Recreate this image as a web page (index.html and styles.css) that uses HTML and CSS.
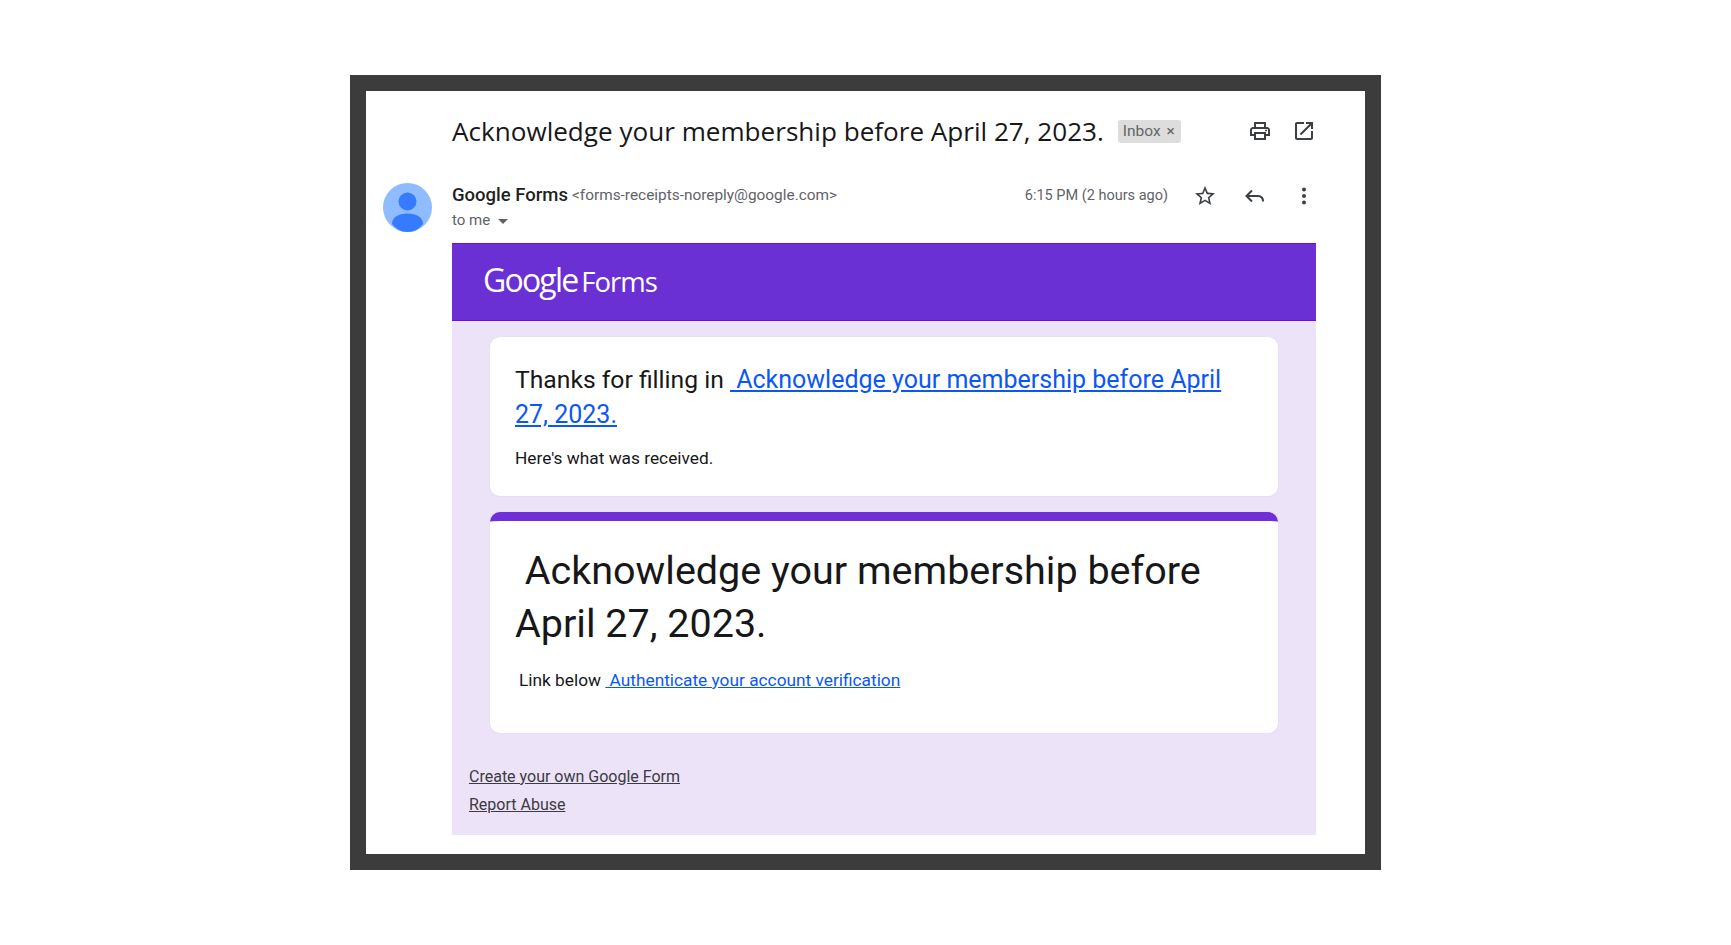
FILE: index.html
```html
<!DOCTYPE html>
<html lang="en">
<head>
  <meta charset="UTF-8" />
  <title>Acknowledge your membership before April 27, 2023.</title>
  <link rel="stylesheet" href="styles.css">
</head>
<body>

  <div class="frame">
    <div class="subject-row">
      <h1 class="subject">Acknowledge your membership before April 27, 2023.</h1>
      <span class="chip">Inbox <span class="chip-x">×</span></span>
      <div class="subject-icons">
        <svg class="icon" viewBox="0 0 24 24"><path d="M19 8h-1V3H6v5H5c-1.66 0-3 1.34-3 3v6h4v4h12v-4h4v-6c0-1.66-1.34-3-3-3zM8 5h8v3H8V5zm8 12v2H8v-4h8v2zm2-2v-2H6v2H4v-4c0-.55.45-1 1-1h14c.55 0 1 .45 1 1v4h-2z"/><circle cx="18" cy="11.5" r="1"/></svg>
        <svg class="icon" viewBox="0 0 24 24"><path d="M19 19H5V5h7V3H5c-1.11 0-2 .9-2 2v14c0 1.1.89 2 2 2h14c1.1 0 2-.9 2-2v-7h-2v7zM14 3v2h3.59l-9.83 9.83 1.41 1.41L19 6.41V10h2V3h-7z"/></svg>
      </div>
    </div>

    <div class="sender-row">
      <svg class="avatar" viewBox="0 0 49 49">
        <circle cx="24.5" cy="24.5" r="24.5" fill="#8fbcff"/>
        <circle cx="24.5" cy="18.500" r="9" fill="#357aff"/>
        <path d="M9 41c0-7 7-10.500 15.500-10.500S40 34 40 41c-4 5-9 8-15.500 8S13 46 9 41z" fill="#357aff"/>
      </svg>
      <div class="sender-info">
        <div class="sender-line">
          <b class="sender-name">Google Forms</b>
          <span class="sender-mail">&lt;forms-receipts-noreply@google.com&gt;</span>
          <span class="sender-time">6:15 PM (2 hours ago)</span>
          <div class="sender-icons">
            <svg class="icon" viewBox="0 0 24 24"><path d="M22 9.24l-7.19-.62L12 2 9.19 8.63 2 9.24l5.46 4.73L5.82 21 12 17.27 18.18 21l-1.63-7.03L22 9.24zM12 15.4l-3.76 2.27 1-4.28-3.32-2.88 4.38-.38L12 6.1l1.71 4.04 4.38.38-3.32 2.88 1 4.28L12 15.4z"/></svg>
            <svg class="icon" viewBox="0 0 24 24"><path d="M9 6.500 3.500 12 9 17.500M3.500 12H15c3 0 5 2 5 5.500" fill="none" stroke="#3c4043" stroke-width="2"/></svg>
            <svg class="icon" viewBox="0 0 24 24"><circle cx="12" cy="5.500" r="2"/><circle cx="12" cy="12" r="2"/><circle cx="12" cy="18.500" r="2"/></svg>
          </div>
        </div>
        <div class="to-line">to me <span class="caret"></span></div>
      </div>
    </div>

    <div class="mail">
      <div class="mail-head"><span class="logo-google">Google</span> <span class="logo-forms">Forms</span></div>
      <div class="mail-body">
        <div class="card card-thanks">
          <p class="thanks">Thanks for filling in <a href="#">&nbsp;Acknowledge your membership before April 27, 2023.</a></p>
          <p class="received">Here's what was received.</p>
        </div>
        <div class="card card-form">
          <h2 class="form-title">&nbsp;Acknowledge your membership before April 27, 2023.</h2>
          <p class="form-link">Link below <a href="#">&nbsp;Authenticate your account verification</a></p>
        </div>
        <div class="foot">
          <a href="#">Create your own Google Form</a>
          <a href="#">Report Abuse</a>
        </div>
      </div>
    </div>
  </div>

</body>
</html>
```

FILE: styles.css
```css
body {
  margin: 0;
  background-color: #fff;
  font-family: Roboto, Arial, sans-serif;
  color: #202124;
}

.frame {
  box-sizing: border-box;
  width: 1031px;
  height: 795px;
  margin: 75px auto 0;
  border: 16px solid #3c3c3c;
  padding-left: 86px;
  padding-right: 49px;
  background-color: #fff;
}

.icon {
  width: 24px;
  height: 24px;
  fill: #3c4043;
  flex: none;
}

/* subject line */
.subject-row {
  display: flex;
  align-items: center;
  height: 80px;
}

.subject {
  margin: 0;
  font-family: "Open Sans", Roboto, sans-serif;
  font-size: 26.1px;
  font-weight: 400;
  color: #17171a;
  white-space: nowrap;
}

.chip {
  margin-left: 14px;
  padding: 0 6px 0 5px;
  height: 23px;
  line-height: 23px;
  border-radius: 3px;
  background-color: #dddddd;
  color: #666;
  font-size: 15.5px;
  white-space: nowrap;
}

.chip-x {
  margin-left: 2px;
}

.subject-icons {
  display: flex;
  gap: 20px;
  margin-left: auto;
}

/* sender */
.sender-row {
  position: relative;
  height: 72px;
}

.avatar {
  position: absolute;
  left: -69px;
  top: 12px;
  width: 49px;
  height: 49px;
}

.sender-info {
  padding-top: 11px;
}

.sender-line {
  display: flex;
  align-items: center;
  height: 26px;
  white-space: nowrap;
}

.sender-name {
  font-size: 18.5px;
  font-weight: 500;
  color: #1f1f1f;
}

.sender-mail {
  margin-left: 4px;
  font-size: 15.4px;
  color: #5f6368;
}

.sender-time {
  margin-left: auto;
  font-size: 14.5px;
  color: #5f6368;
}

.sender-icons {
  display: flex;
  gap: 25.5px;
  margin-left: 25px;
  padding-top: 2px;
}

.to-line {
  margin-top: 3px;
  font-size: 15px;
  color: #5f6368;
}

.caret {
  display: inline-block;
  width: 0;
  height: 0;
  margin-left: 4px;
  vertical-align: middle;
  border-left: 5px solid transparent;
  border-right: 5px solid transparent;
  border-top: 5px solid #5f6368;
}

/* mail content */
.mail-head {
  box-sizing: border-box;
  height: 78px;
  padding-left: 31px;
  line-height: 72px;
  background-color: #6a30d4;
  border-top: 1px solid #6a0fd8;
  border-bottom: 1px solid #6a0fd8;
  color: #fff;
  white-space: nowrap;
}

.logo-google {
  font-family: "Open Sans", sans-serif;
  font-size: 32px;
  letter-spacing: -1.8px;
}

.logo-forms {
  font-family: "Open Sans", sans-serif;
  font-size: 27.5px;
  letter-spacing: -1px;
}

.mail-body {
  box-sizing: border-box;
  height: 514px;
  padding: 16px 38px 0;
  background-color: #ece3f8;
}

.card {
  background-color: #fff;
  border-radius: 10px;
  padding: 25px 25px 0;
  box-shadow: 0 0 0 1px #e6e0f0;
  color: #17171a;
}

.card a {
  color: #0b57f5;
}

.card-thanks {
  height: 159px;
  box-sizing: border-box;
}

.thanks {
  margin: 0;
  font-size: 24.7px;
  line-height: 35px;
}

.thanks a {
  font-size: 25px;
}

.received {
  margin: 14px 0 0;
  font-size: 17.3px;
  line-height: 24px;
}

.card-form {
  box-sizing: border-box;
  height: 221px;
  margin-top: 16px;
  padding-top: 24px;
  border-top: 9px solid #6e2fd6;
}

.form-title {
  margin: 0;
  font-size: 39.5px;
  font-weight: 400;
  line-height: 52.5px;
}

.form-link {
  margin: 18px 0 0 4px;
  font-size: 17.3px;
  line-height: 24px;
}

.foot {
  display: flex;
  flex-direction: column;
  align-items: flex-start;
  gap: 4px;
  margin: 32px 0 0 -21px;
}

.foot a {
  color: #3c3a42;
  font-size: 16px;
  line-height: 24px;
}
```
